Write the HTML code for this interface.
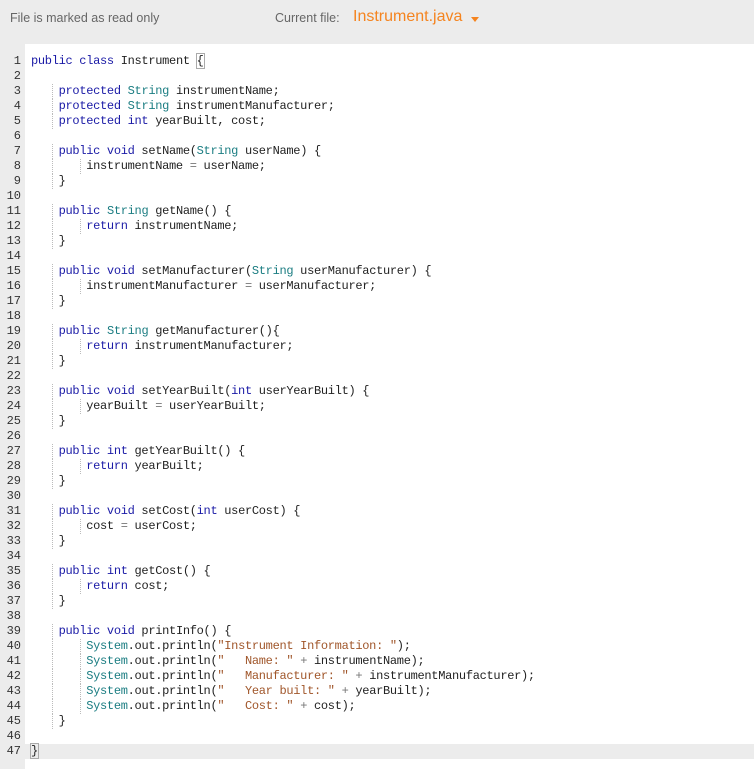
<!DOCTYPE html>
<html><head><meta charset="utf-8"><style>
*{margin:0;padding:0;box-sizing:border-box}
body{width:754px;height:769px;background:#fff;font-family:"Liberation Sans",sans-serif;overflow:hidden;position:relative}
.hdr{position:absolute;left:0;top:0;width:754px;height:44px;background:#ececec}
.ro{position:absolute;left:10px;top:11px;font-size:12.5px;color:#666}
.cf{position:absolute;left:275px;top:11px;font-size:12.5px;color:#666}
.fn{position:absolute;left:353px;top:8px;font-size:16px;color:#f5841f}
.tri{position:absolute;left:471px;top:17px;width:0;height:0;border-left:4px solid transparent;border-right:4px solid transparent;border-top:5px solid #f5841f}
.gut{position:absolute;left:0;top:44px;width:25px;height:725px;background:#ececec}
.code{position:absolute;left:0;top:54px;width:754px;font-family:"Liberation Mono",monospace;font-size:12px;letter-spacing:-0.3px}
.l{position:relative;height:15px;line-height:15px;white-space:pre;color:#222}
.n{position:absolute;left:0;width:21px;text-align:right;color:#333;letter-spacing:0}
.t{position:absolute;left:31px}
.g1,.g2{position:absolute;top:0;height:15px;border-left:1px dotted #bbb}
.g1{left:52px}.g2{left:80px}
.k{color:#1a1aa6}.s{color:#1b7d82}.q{color:#a0562a}.o{color:#777}
.hl{background:#ececec}
.br{outline:1px solid #aaa}
</style></head><body>
<div class="hdr"><span class="ro">File is marked as read only</span><span class="cf">Current file:</span><span class="fn">Instrument.java</span><span class="tri"></span></div>
<div class="gut"></div>
<div class="code">
<div class="l"><span class="n">1</span><span class="t"><span class="k">public class</span> Instrument <span class="br">{</span></span></div>
<div class="l"><span class="n">2</span></div>
<div class="l"><span class="n">3</span><i class="g1"></i><span class="t">    <span class="k">protected</span> <span class="s">String</span> instrumentName;</span></div>
<div class="l"><span class="n">4</span><i class="g1"></i><span class="t">    <span class="k">protected</span> <span class="s">String</span> instrumentManufacturer;</span></div>
<div class="l"><span class="n">5</span><i class="g1"></i><span class="t">    <span class="k">protected int</span> yearBuilt, cost;</span></div>
<div class="l"><span class="n">6</span></div>
<div class="l"><span class="n">7</span><i class="g1"></i><span class="t">    <span class="k">public void</span> setName(<span class="s">String</span> userName) {</span></div>
<div class="l"><span class="n">8</span><i class="g1"></i><i class="g2"></i><span class="t">        instrumentName <span class="o">=</span> userName;</span></div>
<div class="l"><span class="n">9</span><i class="g1"></i><span class="t">    }</span></div>
<div class="l"><span class="n">10</span></div>
<div class="l"><span class="n">11</span><i class="g1"></i><span class="t">    <span class="k">public</span> <span class="s">String</span> getName() {</span></div>
<div class="l"><span class="n">12</span><i class="g1"></i><i class="g2"></i><span class="t">        <span class="k">return</span> instrumentName;</span></div>
<div class="l"><span class="n">13</span><i class="g1"></i><span class="t">    }</span></div>
<div class="l"><span class="n">14</span></div>
<div class="l"><span class="n">15</span><i class="g1"></i><span class="t">    <span class="k">public void</span> setManufacturer(<span class="s">String</span> userManufacturer) {</span></div>
<div class="l"><span class="n">16</span><i class="g1"></i><i class="g2"></i><span class="t">        instrumentManufacturer <span class="o">=</span> userManufacturer;</span></div>
<div class="l"><span class="n">17</span><i class="g1"></i><span class="t">    }</span></div>
<div class="l"><span class="n">18</span></div>
<div class="l"><span class="n">19</span><i class="g1"></i><span class="t">    <span class="k">public</span> <span class="s">String</span> getManufacturer(){</span></div>
<div class="l"><span class="n">20</span><i class="g1"></i><i class="g2"></i><span class="t">        <span class="k">return</span> instrumentManufacturer;</span></div>
<div class="l"><span class="n">21</span><i class="g1"></i><span class="t">    }</span></div>
<div class="l"><span class="n">22</span></div>
<div class="l"><span class="n">23</span><i class="g1"></i><span class="t">    <span class="k">public void</span> setYearBuilt(<span class="k">int</span> userYearBuilt) {</span></div>
<div class="l"><span class="n">24</span><i class="g1"></i><i class="g2"></i><span class="t">        yearBuilt <span class="o">=</span> userYearBuilt;</span></div>
<div class="l"><span class="n">25</span><i class="g1"></i><span class="t">    }</span></div>
<div class="l"><span class="n">26</span></div>
<div class="l"><span class="n">27</span><i class="g1"></i><span class="t">    <span class="k">public int</span> getYearBuilt() {</span></div>
<div class="l"><span class="n">28</span><i class="g1"></i><i class="g2"></i><span class="t">        <span class="k">return</span> yearBuilt;</span></div>
<div class="l"><span class="n">29</span><i class="g1"></i><span class="t">    }</span></div>
<div class="l"><span class="n">30</span></div>
<div class="l"><span class="n">31</span><i class="g1"></i><span class="t">    <span class="k">public void</span> setCost(<span class="k">int</span> userCost) {</span></div>
<div class="l"><span class="n">32</span><i class="g1"></i><i class="g2"></i><span class="t">        cost <span class="o">=</span> userCost;</span></div>
<div class="l"><span class="n">33</span><i class="g1"></i><span class="t">    }</span></div>
<div class="l"><span class="n">34</span></div>
<div class="l"><span class="n">35</span><i class="g1"></i><span class="t">    <span class="k">public int</span> getCost() {</span></div>
<div class="l"><span class="n">36</span><i class="g1"></i><i class="g2"></i><span class="t">        <span class="k">return</span> cost;</span></div>
<div class="l"><span class="n">37</span><i class="g1"></i><span class="t">    }</span></div>
<div class="l"><span class="n">38</span></div>
<div class="l"><span class="n">39</span><i class="g1"></i><span class="t">    <span class="k">public void</span> printInfo() {</span></div>
<div class="l"><span class="n">40</span><i class="g1"></i><i class="g2"></i><span class="t">        <span class="s">System</span>.out.println(<span class="q">"Instrument Information: "</span>);</span></div>
<div class="l"><span class="n">41</span><i class="g1"></i><i class="g2"></i><span class="t">        <span class="s">System</span>.out.println(<span class="q">"   Name: "</span> <span class="o">+</span> instrumentName);</span></div>
<div class="l"><span class="n">42</span><i class="g1"></i><i class="g2"></i><span class="t">        <span class="s">System</span>.out.println(<span class="q">"   Manufacturer: "</span> <span class="o">+</span> instrumentManufacturer);</span></div>
<div class="l"><span class="n">43</span><i class="g1"></i><i class="g2"></i><span class="t">        <span class="s">System</span>.out.println(<span class="q">"   Year built: "</span> <span class="o">+</span> yearBuilt);</span></div>
<div class="l"><span class="n">44</span><i class="g1"></i><i class="g2"></i><span class="t">        <span class="s">System</span>.out.println(<span class="q">"   Cost: "</span> <span class="o">+</span> cost);</span></div>
<div class="l"><span class="n">45</span><i class="g1"></i><span class="t">    }</span></div>
<div class="l"><span class="n">46</span></div>
<div class="l hl"><span class="n">47</span><span class="t"><span class="br">}</span></span></div>
</div>
</body></html>
